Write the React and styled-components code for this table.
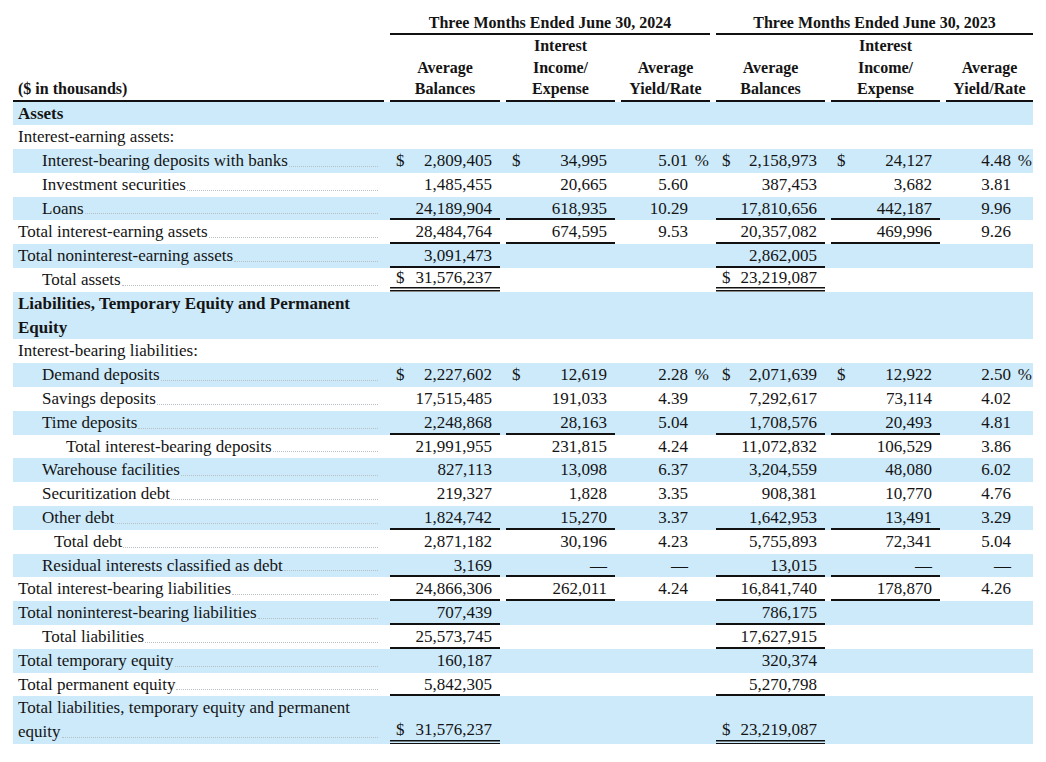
import React from 'react';
import styled, { createGlobalStyle } from 'styled-components';

const GlobalStyle = createGlobalStyle`
  body {
    margin: 0;
    background: #fff;
    font-family: "Liberation Serif", "Times New Roman", serif;
    color: #141414;
  }
`;

const COLS = '374px 116px 115px 95px 115px 115px 90px';
const LINE = 23.8;

const Page = styled.div`
  padding: 12px 0 0 13px;
  width: 1020px;
  font-size: 17px;
`;

const HeadGrid = styled.div`
  display: grid;
  grid-template-columns: ${COLS};
  font-weight: bold;
  font-size: 16px;
`;

const GroupTitle = styled.div`
  grid-column: ${(p) => p.$span};
  padding: 0 ${(p) => (p.$last ? '0' : '3px')} 0 3px;
  div {
    text-align: center;
    line-height: 21px;
    border-bottom: 2px solid #111;
  }
`;

const ColHead = styled.div`
  padding: 0 ${(p) => (p.$last ? '0' : '3px')} 0 ${(p) => (p.$first ? '0' : '3px')};
  display: flex;
`;

const ColHeadInner = styled.div`
  flex: 1;
  display: flex;
  flex-direction: column;
  justify-content: flex-end;
  align-items: ${(p) => (p.$left ? 'flex-start' : 'center')};
  padding-left: ${(p) => (p.$left ? '5px' : '0')};
  height: ${21.5 * 3}px;
  line-height: 21.5px;
  border-bottom: 2px solid #111;
`;

const Row = styled.div`
  display: grid;
  grid-template-columns: ${COLS};
  grid-template-rows: ${(p) => (p.$lines || 1) * LINE}px;
  height: ${(p) => (p.$lines || 1) * LINE}px;
  line-height: ${LINE}px;
  background: ${(p) => (p.$shaded ? '#cdeafa' : 'transparent')};
`;

const LabelCell = styled.div`
  padding: 0 3px 0 ${(p) => p.$indent}px;
  display: flex;
  flex-direction: column;
  justify-content: flex-end;
  font-weight: ${(p) => (p.$bold ? 'bold' : 'normal')};
`;

const LabelLine = styled.div`
  display: flex;
  align-items: flex-end;
  white-space: nowrap;
`;

const Leader = styled.span`
  flex: 1;
  margin: 0 6px 6px 1px;
  border-bottom: 1.5px dotted #b9c0c4;
`;

const Cell = styled.div`
  padding: 0 ${(p) => (p.$last ? '0' : '3px')} 0 3px;
  display: flex;
  min-height: 0;
`;

const rule = (pos, size) => `linear-gradient(#111, #111) left ${pos} / 100% ${size} no-repeat`;

const Inner = styled.div`
  flex: 1;
  display: flex;
  align-items: flex-end;
  background: ${(p) =>
    p.$line === 'double'
      ? `${rule('bottom', '1.5px')}, ${rule('calc(100% - 3px)', '1.5px')}`
      : p.$line === 'single'
        ? rule('bottom', '2px')
        : 'none'};
  padding: 0 ${(p) => (p.$yield ? '0' : '8px')} ${(p) => (p.$line === 'double' ? '2px' : '0')}
    ${(p) => (p.$yield ? '0' : '6px')};
`;

const Num = styled.span`
  margin-left: auto;
  white-space: nowrap;
`;

const Pct = styled.span`
  width: 21px;
  text-align: right;
  padding-right: 1px;
`;

const rows = [
  { label: 'Assets', indent: 5, bold: true, noLeader: true },
  { label: 'Interest-earning assets:', indent: 5, noLeader: true },
  {
    label: 'Interest-bearing deposits with banks', indent: 29,
    v: ['$2,809,405', '$34,995', '5.01%', '$2,158,973', '$24,127', '4.48%'],
  },
  { label: 'Investment securities', indent: 29, v: ['1,485,455', '20,665', '5.60', '387,453', '3,682', '3.81'] },
  {
    label: 'Loans', indent: 29, v: ['24,189,904', '618,935', '10.29', '17,810,656', '442,187', '9.96'],
    line: [1, 2, 4, 5],
  },
  {
    label: 'Total interest-earning assets', indent: 5,
    v: ['28,484,764', '674,595', '9.53', '20,357,082', '469,996', '9.26'], line: [1, 2, 4, 5],
  },
  { label: 'Total noninterest-earning assets', indent: 5, v: ['3,091,473', '', '', '2,862,005', '', ''], line: [1, 4] },
  { label: 'Total assets', indent: 29, v: ['$31,576,237', '', '', '$23,219,087', '', ''], double: [1, 4] },
  { label: ['Liabilities, Temporary Equity and Permanent', 'Equity'], indent: 5, bold: true, noLeader: true },
  { label: 'Interest-bearing liabilities:', indent: 5, noLeader: true },
  {
    label: 'Demand deposits', indent: 29,
    v: ['$2,227,602', '$12,619', '2.28%', '$2,071,639', '$12,922', '2.50%'],
  },
  { label: 'Savings deposits', indent: 29, v: ['17,515,485', '191,033', '4.39', '7,292,617', '73,114', '4.02'] },
  {
    label: 'Time deposits', indent: 29, v: ['2,248,868', '28,163', '5.04', '1,708,576', '20,493', '4.81'],
    line: [1, 2, 4, 5],
  },
  {
    label: 'Total interest-bearing deposits', indent: 53,
    v: ['21,991,955', '231,815', '4.24', '11,072,832', '106,529', '3.86'],
  },
  { label: 'Warehouse facilities', indent: 29, v: ['827,113', '13,098', '6.37', '3,204,559', '48,080', '6.02'] },
  { label: 'Securitization debt', indent: 29, v: ['219,327', '1,828', '3.35', '908,381', '10,770', '4.76'] },
  {
    label: 'Other debt', indent: 29, v: ['1,824,742', '15,270', '3.37', '1,642,953', '13,491', '3.29'],
    line: [1, 2, 4, 5],
  },
  { label: 'Total debt', indent: 41, v: ['2,871,182', '30,196', '4.23', '5,755,893', '72,341', '5.04'] },
  {
    label: 'Residual interests classified as debt', indent: 29,
    v: ['3,169', '—', '—', '13,015', '—', '—'], line: [1, 2, 4, 5],
  },
  {
    label: 'Total interest-bearing liabilities', indent: 5,
    v: ['24,866,306', '262,011', '4.24', '16,841,740', '178,870', '4.26'], line: [1, 2, 4, 5],
  },
  { label: 'Total noninterest-bearing liabilities', indent: 5, v: ['707,439', '', '', '786,175', '', ''], line: [1, 4] },
  { label: 'Total liabilities', indent: 29, v: ['25,573,745', '', '', '17,627,915', '', ''], line: [1, 4] },
  { label: 'Total temporary equity', indent: 5, v: ['160,187', '', '', '320,374', '', ''] },
  { label: 'Total permanent equity', indent: 5, v: ['5,842,305', '', '', '5,270,798', '', ''], line: [1, 4] },
  {
    label: ['Total liabilities, temporary equity and permanent', 'equity'], indent: 5,
    v: ['$31,576,237', '', '', '$23,219,087', '', ''], double: [1, 4],
  },
];

function ValueCell({ value, col, line }) {
  const isYield = col === 3 || col === 6;
  const raw = value || '';
  const dollar = raw.startsWith('$');
  const pct = raw.endsWith('%');
  const text = raw.replace('$', '').replace('%', '');
  return (
    <Cell $last={col === 6}>
      <Inner $line={line} $yield={isYield}>
        {dollar && <span>$</span>}
        <Num>{text}</Num>
        {isYield && <Pct>{pct ? '%' : ''}</Pct>}
      </Inner>
    </Cell>
  );
}

function TableRow({ row, shaded }) {
  const parts = Array.isArray(row.label) ? row.label : [row.label];
  return (
    <Row $shaded={shaded} $lines={parts.length}>
      <LabelCell $indent={row.indent} $bold={row.bold}>
        {parts.map((text, i) => (
          <LabelLine key={i}>
            <span>{text}</span>
            {!row.noLeader && i === parts.length - 1 && <Leader />}
          </LabelLine>
        ))}
      </LabelCell>
      {[1, 2, 3, 4, 5, 6].map((c) => (
        <ValueCell
          key={c}
          col={c}
          value={row.v ? row.v[c - 1] : ''}
          line={row.double?.includes(c) ? 'double' : row.line?.includes(c) ? 'single' : null}
        />
      ))}
    </Row>
  );
}

const subHeads = [
  ['Average', 'Balances'],
  ['Interest', 'Income/', 'Expense'],
  ['Average', 'Yield/Rate'],
];

export default function App() {
  return (
    <Page>
      <GlobalStyle />
      <HeadGrid>
        <div />
        <GroupTitle $span="2 / 5">
          <div>Three Months Ended June 30, 2024</div>
        </GroupTitle>
        <GroupTitle $span="5 / 8" $last>
          <div>Three Months Ended June 30, 2023</div>
        </GroupTitle>
        <ColHead $first>
          <ColHeadInner $left>($ in thousands)</ColHeadInner>
        </ColHead>
        {[...subHeads, ...subHeads].map((h, i) => (
          <ColHead key={i} $last={i === 5}>
            <ColHeadInner>
              {h.map((t) => (
                <span key={t}>{t}</span>
              ))}
            </ColHeadInner>
          </ColHead>
        ))}
      </HeadGrid>
      {rows.map((r, i) => (
        <TableRow key={i} row={r} shaded={i % 2 === 0} />
      ))}
    </Page>
  );
}
